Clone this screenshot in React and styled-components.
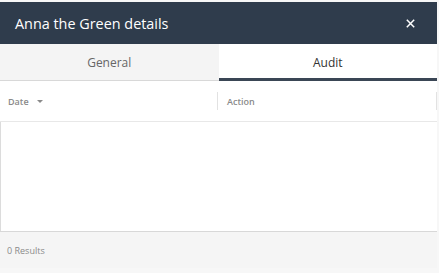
import React from 'react'
import styled, { createGlobalStyle } from 'styled-components'

const Global = createGlobalStyle`
  html, body {
    margin: 0;
    padding: 0;
    background: #f7f7f7;
    font-family: "Open Sans", "Noto Sans", sans-serif;
  }
`

const Panel = styled.div`
  width: 437px;
  margin-top: 2px;
  display: flex;
  flex-direction: column;
  background: #fff;
`

const Header = styled.div`
  height: 42px;
  background: #2f3c4c;
  display: flex;
  align-items: center;
  justify-content: space-between;
  padding: 0 22px 0 15px;
  color: #fff;
`

const Title = styled.h2`
  margin: 0;
  font-size: 14.4px;
  font-weight: 400;
`

const Close = styled.button`
  border: 0;
  background: none;
  padding: 0;
  color: #fff;
  display: flex;
  cursor: pointer;
`

const Tabs = styled.div`
  display: flex;
  height: 37px;
`

const Tab = styled.div`
  flex: 1;
  display: flex;
  align-items: center;
  justify-content: center;
  font-size: 12px;
  color: ${p => (p.active ? '#333' : '#666')};
  background: ${p => (p.active ? '#fff' : '#f4f4f4')};
  border-bottom: ${p => (p.active ? '3px solid #3a4655' : '1px solid #d8d8d8')};
  box-sizing: border-box;
  padding-top: ${p => (p.active ? '2px' : '0')};
`

const TableHead = styled.div`
  display: flex;
  height: 40px;
  border-bottom: 1px solid #e8e8e8;
  align-items: center;
`

const HeadCell = styled.div`
  flex: 1;
  display: flex;
  align-items: center;
  gap: 8px;
  height: 18px;
  padding-left: ${p => (p.first ? '8px' : '9px')};
  border-right: 1px solid #e2e2e2;
  font-size: 9px;
  font-weight: 600;
  color: #8a8a8a;
`

const Caret = styled.span`
  width: 0;
  height: 0;
  border-left: 3px solid transparent;
  border-right: 3px solid transparent;
  border-top: 3px solid #8a8a8a;
`

const Body = styled.div`
  height: 109px;
  border-left: 1px solid #dcdcdc;
`

const Footer = styled.div`
  height: 36px;
  border-top: 1px solid #d8d8d8;
  background: #f5f5f5;
  display: flex;
  align-items: center;
  padding-left: 7px;
  font-size: 9px;
  color: #8a8a8a;
`

export default function App() {
  return (
    <>
      <Global />
      <Panel>
        <Header>
          <Title>Anna the Green details</Title>
          <Close aria-label="close">
            <svg width="9" height="9" viewBox="0 0 9 9">
              <path d="M0.8 0.8L8.2 8.2M8.2 0.8L0.8 8.2" stroke="#fff" strokeWidth="1.5" />
            </svg>
          </Close>
        </Header>
        <Tabs>
          <Tab>General</Tab>
          <Tab active>Audit</Tab>
        </Tabs>
        <TableHead>
          <HeadCell first>
            Date <Caret />
          </HeadCell>
          <HeadCell>Action</HeadCell>
        </TableHead>
        <Body />
        <Footer>0 Results</Footer>
      </Panel>
    </>
  )
}
